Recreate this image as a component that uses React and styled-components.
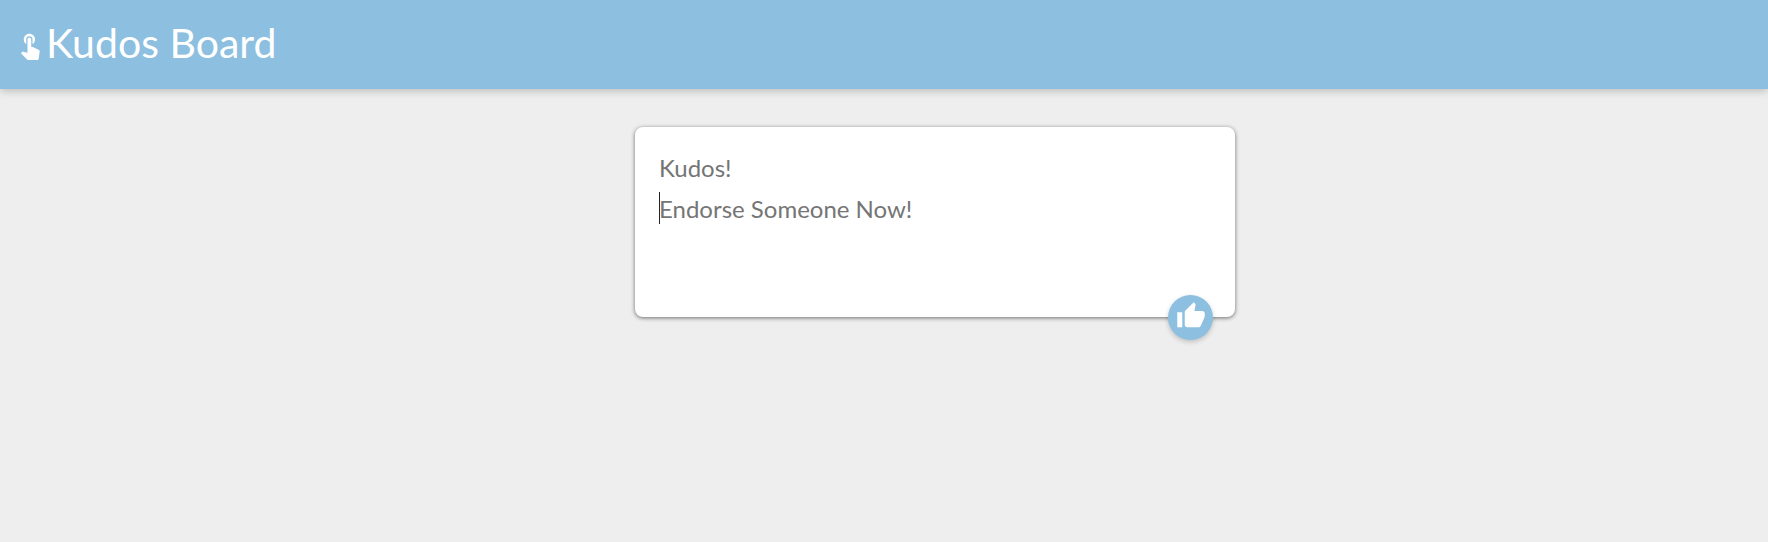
import React from "react";
import styled, { createGlobalStyle } from "styled-components";
import { MdThumbUp, MdTouchApp } from "react-icons/md";

const GlobalStyle = createGlobalStyle`
  html, body {
    margin: 0;
    padding: 0;
    background: #eeeeee;
  }
`;

const App = () => {
  return (
    <Page>
      <GlobalStyle />
      <Header>
        <MdTouchApp size={30} />
        <Title>Kudos Board</Title>
      </Header>
      <Main>
        <Card>
          <Heading>Kudos!</Heading>
          <Input>
            <Caret />
            Endorse Someone Now!
          </Input>
          <Fab aria-label="Send kudos">
            <MdThumbUp size={30} />
          </Fab>
        </Card>
      </Main>
    </Page>
  );
};

const Page = styled.div`
  width: 100%;
  height: 542px;
  overflow: hidden;
  background: #eeeeee;
`;

const Header = styled.header`
  display: flex;
  align-items: center;
  height: 89px;
  padding: 0 0 0 15px;
  color: #ffffff;
  background: #8dc0e0;
  box-shadow: 0 2px 8px rgba(0, 0, 0, 0.22);
`;

const Title = styled.h1`
  margin: -4px 0 0 1px;
  font-family: "Comic Sans MS", "Lato", "Liberation Sans", sans-serif;
  font-size: 41px;
  font-weight: 400;
  line-height: 1;
`;

const Main = styled.main`
  display: flex;
  justify-content: center;
  padding: 38px 0 0 102px;
`;

const Card = styled.section`
  position: relative;
  box-sizing: border-box;
  width: 600px;
  height: 190px;
  padding: 25px 24px 0;
  color: #757575;
  background: #ffffff;
  border-radius: 8px;
  box-shadow: 0 1px 4px rgba(0, 0, 0, 0.55);
  font-family: "Lato", "Open Sans", sans-serif;
  font-size: 24px;
`;

const Heading = styled.div`
  line-height: 32px;
`;

const Input = styled.div`
  margin-top: 8px;
  line-height: 34px;
`;

const Caret = styled.span`
  display: inline-block;
  width: 1px;
  height: 32px;
  margin-right: -1px;
  vertical-align: top;
  background: #222222;
`;

const Fab = styled.button`
  position: absolute;
  right: 22px;
  bottom: -23px;
  display: flex;
  align-items: center;
  justify-content: center;
  width: 45px;
  height: 45px;
  padding: 0 0 3px;
  color: #ffffff;
  background: #8dc0e0;
  border: none;
  border-radius: 50%;
  box-shadow: 0 2px 5px rgba(0, 0, 0, 0.2);
  cursor: pointer;
`;

export default App;
